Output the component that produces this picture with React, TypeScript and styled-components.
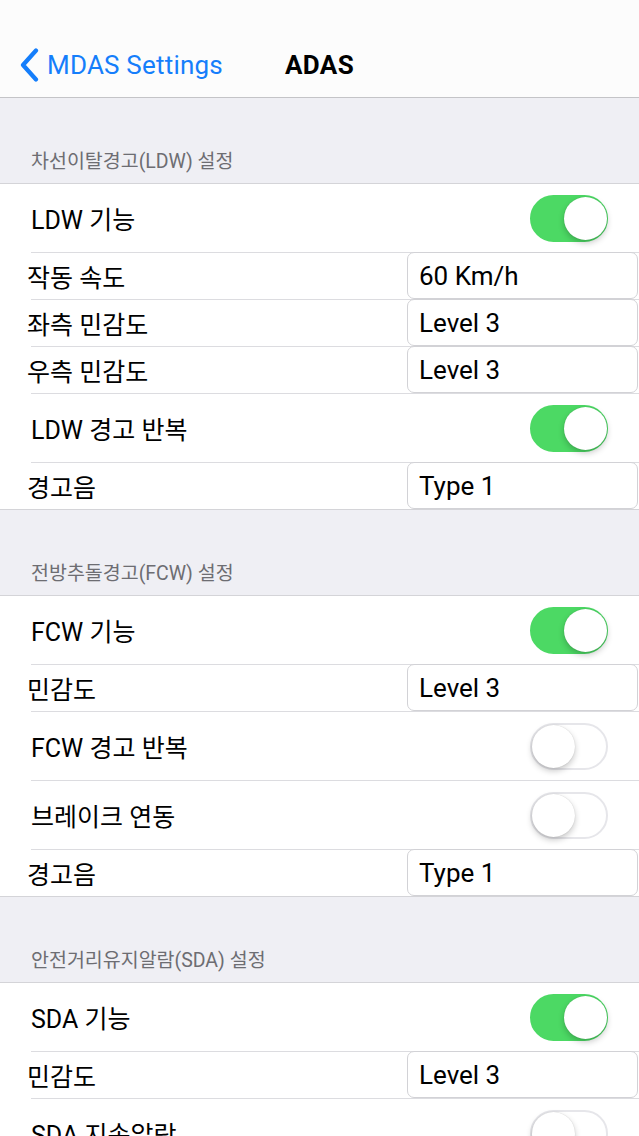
import styled, { createGlobalStyle } from "styled-components";

const GlobalStyle = createGlobalStyle`
  html, body {
    margin: 0;
    padding: 0;
    background: #efeff4;
  }
  body {
    font-family: "Roboto", "Noto Sans CJK KR", sans-serif;
    -webkit-font-smoothing: antialiased;
  }
`;

const Screen = styled.div`
  width: 639px;
  height: 1136px;
  overflow: hidden;
  background: #efeff4;
  display: flex;
  flex-direction: column;
`;

const NavBar = styled.div`
  height: 98px;
  flex-shrink: 0;
  box-sizing: border-box;
  padding-top: 32px;
  background: #fcfcfc;
  border-bottom: 1px solid #c4c4c7;
  display: grid;
  grid-template-columns: 1fr auto 1fr;
  align-items: center;
`;

const BackButton = styled.div`
  display: flex;
  align-items: center;
  gap: 8px;
  padding-left: 20px;
  color: #157efb;
  font-size: 26px;
  letter-spacing: 0.2px;
`;

const Title = styled.div`
  font-size: 26px;
  font-weight: 700;
  color: #000;
  letter-spacing: 0.4px;
`;

const SectionHeader = styled.div`
  height: 85px;
  box-sizing: border-box;
  display: flex;
  align-items: flex-end;
  padding: 0 0 9px 31px;
  font-size: 19.5px;
  color: #6d6d72;
`;

const Group = styled.div`
  background: #fff;
  border-top: 1px solid #d4d4d8;
  border-bottom: 1px solid #d4d4d8;
`;

const Row = styled.div<{ $tall: boolean }>`
  position: relative;
  box-sizing: border-box;
  height: ${(p) => (p.$tall ? 69 : 47)}px;
  display: flex;
  align-items: center;
  justify-content: space-between;
  padding: ${(p) => (p.$tall ? "1px 31px 0 31px" : "0 1px 0 27px")};

  &:not(:first-child)::before {
    content: "";
    position: absolute;
    top: 0;
    left: 31px;
    right: 0;
    height: 1px;
    background: #dcdce0;
  }
  &:first-child {
    height: ${(p) => (p.$tall ? 68 : 46)}px;
    padding-top: 0;
  }
`;

const Label = styled.span`
  font-size: 25px;
  color: #000;
`;

const ValueBox = styled.div`
  width: 231px;
  align-self: stretch;
  box-sizing: border-box;
  border: 1px solid #d2d2d6;
  border-radius: 7px;
  background: #fff;
  display: flex;
  align-items: center;
  padding-left: 11px;
  font-size: 26px;
  color: #000;
  position: relative;
  z-index: 1;
`;

const Switch = styled.div<{ $on: boolean }>`
  width: 78px;
  height: 47px;
  box-sizing: border-box;
  border-radius: 24px;
  position: relative;
  background: ${(p) => (p.$on ? "#4cd964" : "#fff")};
  border: 2px solid ${(p) => (p.$on ? "#4cd964" : "#e6e6ea")};
`;

const Knob = styled.div<{ $on: boolean }>`
  position: absolute;
  top: 0;
  left: ${(p) => (p.$on ? "32px" : "0")};
  width: 43px;
  height: 43px;
  border-radius: 50%;
  background: #fff;
  box-shadow: 0 3px 6px rgba(0, 0, 0, 0.22), 0 0 1px rgba(0, 0, 0, 0.2);
`;

type Item =
  | { kind: "toggle"; label: string; on: boolean }
  | { kind: "value"; label: string; value: string };

const sections: { title: string; items: Item[] }[] = [
  {
    title: "차선이탈경고(LDW) 설정",
    items: [
      { kind: "toggle", label: "LDW 기능", on: true },
      { kind: "value", label: "작동 속도", value: "60 Km/h" },
      { kind: "value", label: "좌측 민감도", value: "Level 3" },
      { kind: "value", label: "우측 민감도", value: "Level 3" },
      { kind: "toggle", label: "LDW 경고 반복", on: true },
      { kind: "value", label: "경고음", value: "Type 1" },
    ],
  },
  {
    title: "전방추돌경고(FCW) 설정",
    items: [
      { kind: "toggle", label: "FCW 기능", on: true },
      { kind: "value", label: "민감도", value: "Level 3" },
      { kind: "toggle", label: "FCW 경고 반복", on: false },
      { kind: "toggle", label: "브레이크 연동", on: false },
      { kind: "value", label: "경고음", value: "Type 1" },
    ],
  },
  {
    title: "안전거리유지알람(SDA) 설정",
    items: [
      { kind: "toggle", label: "SDA 기능", on: true },
      { kind: "value", label: "민감도", value: "Level 3" },
      { kind: "toggle", label: "SDA 지속알람", on: false },
      { kind: "value", label: "경고음", value: "Type 1" },
    ],
  },
];

function BackChevron() {
  return (
    <svg width="19" height="34" viewBox="0 0 19 34">
      <path
        d="M16 2.5 L3 17 L16 31.5"
        fill="none"
        stroke="#157efb"
        strokeWidth="4.2"
        strokeLinecap="round"
        strokeLinejoin="round"
      />
    </svg>
  );
}

export default function App() {
  return (
    <>
      <GlobalStyle />
      <Screen>
        <NavBar>
          <BackButton>
            <BackChevron />
            MDAS Settings
          </BackButton>
          <Title>ADAS</Title>
          <div />
        </NavBar>

        {sections.map((s) => (
          <div key={s.title}>
            <SectionHeader>{s.title}</SectionHeader>
            <Group>
              {s.items.map((it, i) => (
                <Row key={i} $tall={it.kind === "toggle"}>
                  <Label>{it.label}</Label>
                  {it.kind === "toggle" ? (
                    <Switch $on={it.on}>
                      <Knob $on={it.on} />
                    </Switch>
                  ) : (
                    <ValueBox>{it.value}</ValueBox>
                  )}
                </Row>
              ))}
            </Group>
          </div>
        ))}
      </Screen>
    </>
  );
}
